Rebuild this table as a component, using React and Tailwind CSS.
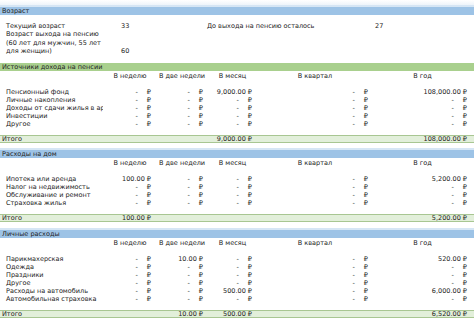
import React from "react";

const F = { fontFamily: '"DejaVu Sans", Verdana, sans-serif' };

function Val({ v }) {
  if (v === "") return <div className="pr-[4px]" />;
  if (v === "-")
    return (
      <div className="flex justify-end pr-[4px] whitespace-pre">
        <span>-</span>
        <span className="inline-block w-[9px]" />
        <span>₽</span>
      </div>
    );
  return (
    <div className="flex justify-end pr-[4px] whitespace-pre">
      <span>{v} ₽</span>
    </div>
  );
}

const COLS = "grid grid-cols-[103px_52px_52px_49px_116px_99px]";

function HeaderRow() {
  return (
    <div className={`${COLS} h-[10px] items-center leading-[10px]`}>
      <div />
      <div className="text-center pl-[2px]">В неделю</div>
      <div className="text-center pl-[2px]">В две недели</div>
      <div className="text-center pl-[2px]">В месяц</div>
      <div className="text-center pl-[2px]">В квартал</div>
      <div className="text-center pl-[2px]">В год</div>
    </div>
  );
}

function DataRow({ label, vals }) {
  return (
    <div className={`${COLS} h-[8px] items-center leading-[8px]`}>
      <div className="pl-[6px] whitespace-nowrap overflow-hidden">{label}</div>
      {vals.map((v, i) => (
        <Val key={i} v={v} />
      ))}
    </div>
  );
}

function TotalRow({ vals }) {
  return (
    <div
      className={`${COLS} h-[8px] items-center leading-[6px] bg-[#e2efda] border-y border-[#a8c692]`}
    >
      <div className="pl-[2px]">Итого</div>
      {vals.map((v, i) => (
        <Val key={i} v={v} />
      ))}
    </div>
  );
}

function BlueBar({ title }) {
  return (
    <div>
      <div className="h-[2px] bg-[#d6e6f5]" />
      <div className="h-[8px] bg-[#9dc3e6] leading-[8px] pl-[2px]">{title}</div>
    </div>
  );
}

function Section({ bar, rows, total, gapAfter }) {
  return (
    <div>
      {bar}
      <HeaderRow />
      <div className="h-[7px]" />
      {rows.map((r, i) => (
        <DataRow key={i} label={r[0]} vals={r[1]} />
      ))}
      <div className="h-[7px]" />
      <TotalRow vals={total} />
    </div>
  );
}

export default function App() {
  const d5 = ["-", "-", "-", "-", "-"];
  return (
    <div
      className="w-[474px] h-[320px] overflow-hidden bg-white text-[6.5px] text-[#222]"
      style={F}
    >
      <div className="h-[5px] bg-gradient-to-b from-[#ffffff] to-[#eef4fa]" />
      <BlueBar title="Возраст" />
      <div className="h-[7px]" />
      <div className="leading-[8.4px]">
        <div className="flex h-[8.4px]">
          <div className="w-[121px] pl-[6px]">Текущий возраст</div>
          <div className="w-[86px]">33</div>
          <div className="w-[168px]">До выхода на пенсию осталось</div>
          <div>27</div>
        </div>
        <div className="flex h-[8.4px]">
          <div className="w-[121px] pl-[6px] whitespace-nowrap">Возраст выхода на пенсию</div>
        </div>
        <div className="flex h-[8.4px]">
          <div className="w-[121px] pl-[6px] whitespace-nowrap">(60 лет для мужчин, 55 лет</div>
        </div>
        <div className="flex h-[8.4px]">
          <div className="w-[121px] pl-[6px]">для женщин)</div>
          <div>60</div>
        </div>
      </div>
      <div className="h-[7px]" />
      <Section
        bar={<div className="h-[8px] bg-[#a9d08e] leading-[8px] pl-[2px]">Источники дохода на пенсии</div>}
        rows={[
          ["Пенсионный фонд", ["-", "-", "9,000.00", "-", "108,000.00"]],
          ["Личные накопления", d5],
          ["Доходы от сдачи жилья в аренду", d5],
          ["Инвестиции", d5],
          ["Другое", d5],
        ]}
        total={["", "", "9,000.00", "", "108,000.00"]}
      />
      <div className="h-[5px]" />
      <Section
        bar={<BlueBar title="Расходы на дом" />}
        rows={[
          ["Ипотека или аренда", ["100.00", "-", "-", "-", "5,200.00"]],
          ["Налог на недвижимость", d5],
          ["Обслуживание и ремонт", d5],
          ["Страховка жилья", d5],
        ]}
        total={["100.00", "", "", "", "5,200.00"]}
      />
      <div className="h-[6px]" />
      <Section
        bar={<BlueBar title="Личные расходы" />}
        rows={[
          ["Парикмахерская", ["-", "10.00", "-", "-", "520.00"]],
          ["Одежда", d5],
          ["Праздники", d5],
          ["Другое", d5],
          ["Расходы на автомобиль", ["-", "-", "500.00", "-", "6,000.00"]],
          ["Автомобильная страховка", d5],
        ]}
        total={["", "10.00", "500.00", "", "6,520.00"]}
      />
    </div>
  );
}
